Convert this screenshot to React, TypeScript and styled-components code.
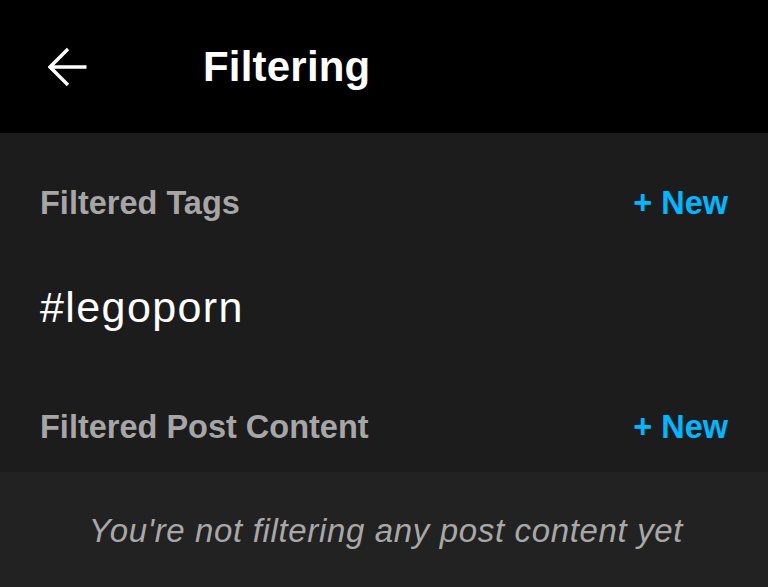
import React from "react";
import styled, { createGlobalStyle } from "styled-components";

const Global = createGlobalStyle`
  html, body { margin: 0; padding: 0; background: #222222; }
  body { font-family: "Liberation Sans", Arial, sans-serif; }
`;

const Page = styled.div`
  width: 768px;
  height: 587px;
  display: flex;
  flex-direction: column;
  background: #222222;
  overflow: hidden;
`;

const Header = styled.header`
  height: 133px;
  flex: none;
  background: #000;
  display: flex;
  align-items: center;
  padding-left: 48px;
  box-sizing: border-box;
`;

const BackButton = styled.button`
  all: unset;
  width: 40px;
  height: 40px;
  display: flex;
  align-items: center;
  justify-content: center;
`;

const Title = styled.h1`
  margin: 0 0 0 115px;
  font-size: 42px;
  line-height: 1;
  font-weight: 700;
  color: #ffffff;
  letter-spacing: 0.2px;
`;

const Section = styled.section`
  background: #1c1c1c;
  padding: 0 40px;
  display: flex;
  flex-direction: column;
`;

const SectionHeader = styled.div<{ $h: number }>`
  height: ${(p) => p.$h}px;
  display: flex;
  align-items: center;
  justify-content: space-between;
`;

const Label = styled.span`
  font-size: 32.5px;
  line-height: 1;
  font-weight: 700;
  color: #a6a6a6;
`;

const NewLink = styled.span`
  font-size: 32.5px;
  line-height: 1;
  font-weight: 700;
  color: #00b8ff;
`;

const TagRow = styled.div`
  height: 109px;
  box-sizing: border-box;
  padding-top: 13px;
  font-size: 43px;
  line-height: 1;
  letter-spacing: 1.4px;
  color: #ffffff;
`;

const Empty = styled.div`
  flex: 1;
  background: #222222;
  text-align: center;
  padding: 42px 0 0 4px;
  box-sizing: border-box;
  font-size: 33px;
  line-height: 1;
  letter-spacing: 0.65px;
  font-style: italic;
  color: #a8a8a8;
`;

export default function App() {
  return (
    <Page>
      <Global />
      <Header>
        <BackButton aria-label="Back">
          <svg width="40" height="40" viewBox="0 0 40 40" fill="none">
            <path d="M38.5 20H2M20 2L2 20l18 18" stroke="#fff" strokeWidth="3.4" strokeLinecap="butt" strokeLinejoin="miter" />
          </svg>
        </BackButton>
        <Title>Filtering</Title>
      </Header>
      <Section>
        <SectionHeader $h={140}>
          <Label>Filtered Tags</Label>
          <NewLink>+ New</NewLink>
        </SectionHeader>
        <TagRow>#legoporn</TagRow>
        <SectionHeader $h={90}>
          <Label>Filtered Post Content</Label>
          <NewLink>+ New</NewLink>
        </SectionHeader>
      </Section>
      <Empty>You're not filtering any post content yet</Empty>
    </Page>
  );
}
